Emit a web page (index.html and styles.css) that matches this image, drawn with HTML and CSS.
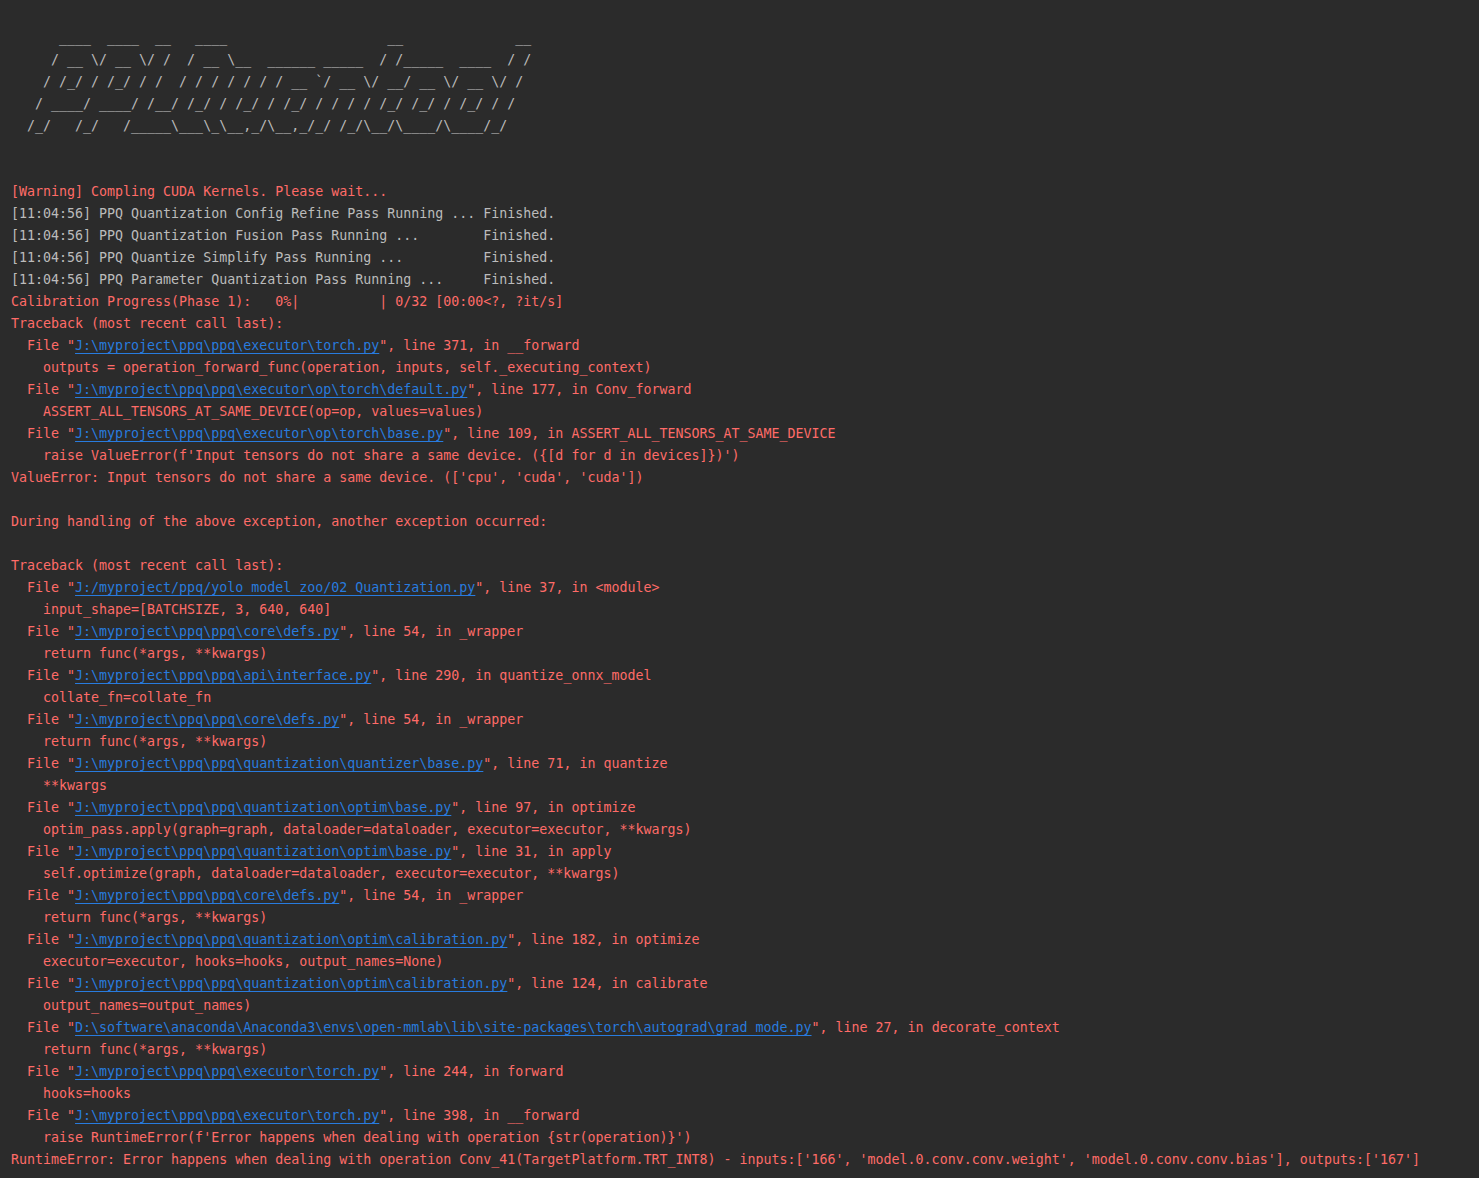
FILE: index.html
```html
<!DOCTYPE html>
<html lang="en">
<head>
  <meta charset="UTF-8">
  <title>Run: 02_Quantization</title>
  <link rel="stylesheet" href="styles.css">
</head>
<body>

<pre class="console"><span class="out">      ____  ____  __   ____                    __              __
     / __ \/ __ \/ /  / __ \__  ______ _____  / /_____  ____  / /
    / /_/ / /_/ / /  / / / / / / / __ `/ __ \/ __/ __ \/ __ \/ /
   / ____/ ____/ /__/ /_/ / /_/ / /_/ / / / / /_/ /_/ / /_/ / /
  /_/   /_/   /_____\___\_\__,_/\__,_/_/ /_/\__/\____/\____/_/</span>


<span class="err">[Warning] Compling CUDA Kernels. Please wait...</span>
<span class="out">[11:04:56] PPQ Quantization Config Refine Pass Running ... Finished.
[11:04:56] PPQ Quantization Fusion Pass Running ...        Finished.
[11:04:56] PPQ Quantize Simplify Pass Running ...          Finished.
[11:04:56] PPQ Parameter Quantization Pass Running ...     Finished.</span>
<span class="err">Calibration Progress(Phase 1):   0%|          | 0/32 [00:00&lt;?, ?it/s]
Traceback (most recent call last):
  File "<a class="link">J:\myproject\ppq\ppq\executor\torch.py</a>", line 371, in __forward
    outputs = operation_forward_func(operation, inputs, self._executing_context)
  File "<a class="link">J:\myproject\ppq\ppq\executor\op\torch\default.py</a>", line 177, in Conv_forward
    ASSERT_ALL_TENSORS_AT_SAME_DEVICE(op=op, values=values)
  File "<a class="link">J:\myproject\ppq\ppq\executor\op\torch\base.py</a>", line 109, in ASSERT_ALL_TENSORS_AT_SAME_DEVICE
    raise ValueError(f'Input tensors do not share a same device. ({[d for d in devices]})')
ValueError: Input tensors do not share a same device. (['cpu', 'cuda', 'cuda'])

During handling of the above exception, another exception occurred:

Traceback (most recent call last):
  File "<a class="link">J:/myproject/ppq/yolo_model_zoo/02_Quantization.py</a>", line 37, in &lt;module&gt;
    input_shape=[BATCHSIZE, 3, 640, 640]
  File "<a class="link">J:\myproject\ppq\ppq\core\defs.py</a>", line 54, in _wrapper
    return func(*args, **kwargs)
  File "<a class="link">J:\myproject\ppq\ppq\api\interface.py</a>", line 290, in quantize_onnx_model
    collate_fn=collate_fn
  File "<a class="link">J:\myproject\ppq\ppq\core\defs.py</a>", line 54, in _wrapper
    return func(*args, **kwargs)
  File "<a class="link">J:\myproject\ppq\ppq\quantization\quantizer\base.py</a>", line 71, in quantize
    **kwargs
  File "<a class="link">J:\myproject\ppq\ppq\quantization\optim\base.py</a>", line 97, in optimize
    optim_pass.apply(graph=graph, dataloader=dataloader, executor=executor, **kwargs)
  File "<a class="link">J:\myproject\ppq\ppq\quantization\optim\base.py</a>", line 31, in apply
    self.optimize(graph, dataloader=dataloader, executor=executor, **kwargs)
  File "<a class="link">J:\myproject\ppq\ppq\core\defs.py</a>", line 54, in _wrapper
    return func(*args, **kwargs)
  File "<a class="link">J:\myproject\ppq\ppq\quantization\optim\calibration.py</a>", line 182, in optimize
    executor=executor, hooks=hooks, output_names=None)
  File "<a class="link">J:\myproject\ppq\ppq\quantization\optim\calibration.py</a>", line 124, in calibrate
    output_names=output_names)
  File "<a class="link">D:\software\anaconda\Anaconda3\envs\open-mmlab\lib\site-packages\torch\autograd\grad_mode.py</a>", line 27, in decorate_context
    return func(*args, **kwargs)
  File "<a class="link">J:\myproject\ppq\ppq\executor\torch.py</a>", line 244, in forward
    hooks=hooks
  File "<a class="link">J:\myproject\ppq\ppq\executor\torch.py</a>", line 398, in __forward
    raise RuntimeError(f'Error happens when dealing with operation {str(operation)}')
RuntimeError: Error happens when dealing with operation Conv_41(TargetPlatform.TRT_INT8) - inputs:['166', 'model.0.conv.conv.weight', 'model.0.conv.conv.bias'], outputs:['167']</span></pre>

</body>
</html>
```

FILE: styles.css
```css
html, body {
  margin: 0;
  padding: 0;
  height: 100%;
  background-color: #2b2b2b;
  overflow: hidden;
}

.console {
  margin: 0;
  padding: 27px 0 0 11px;
  font-family: "DejaVu Sans Mono", "Liberation Mono", monospace;
  font-size: 13.3px;
  line-height: 22px;
  white-space: pre;
  color: #bbbbbb;
}

.out {
  color: #bbbbbb;
}

.err {
  color: #ff6b68;
}

.link {
  color: #287bde;
  text-decoration: underline;
  text-underline-offset: 3px;
  cursor: pointer;
}
```
